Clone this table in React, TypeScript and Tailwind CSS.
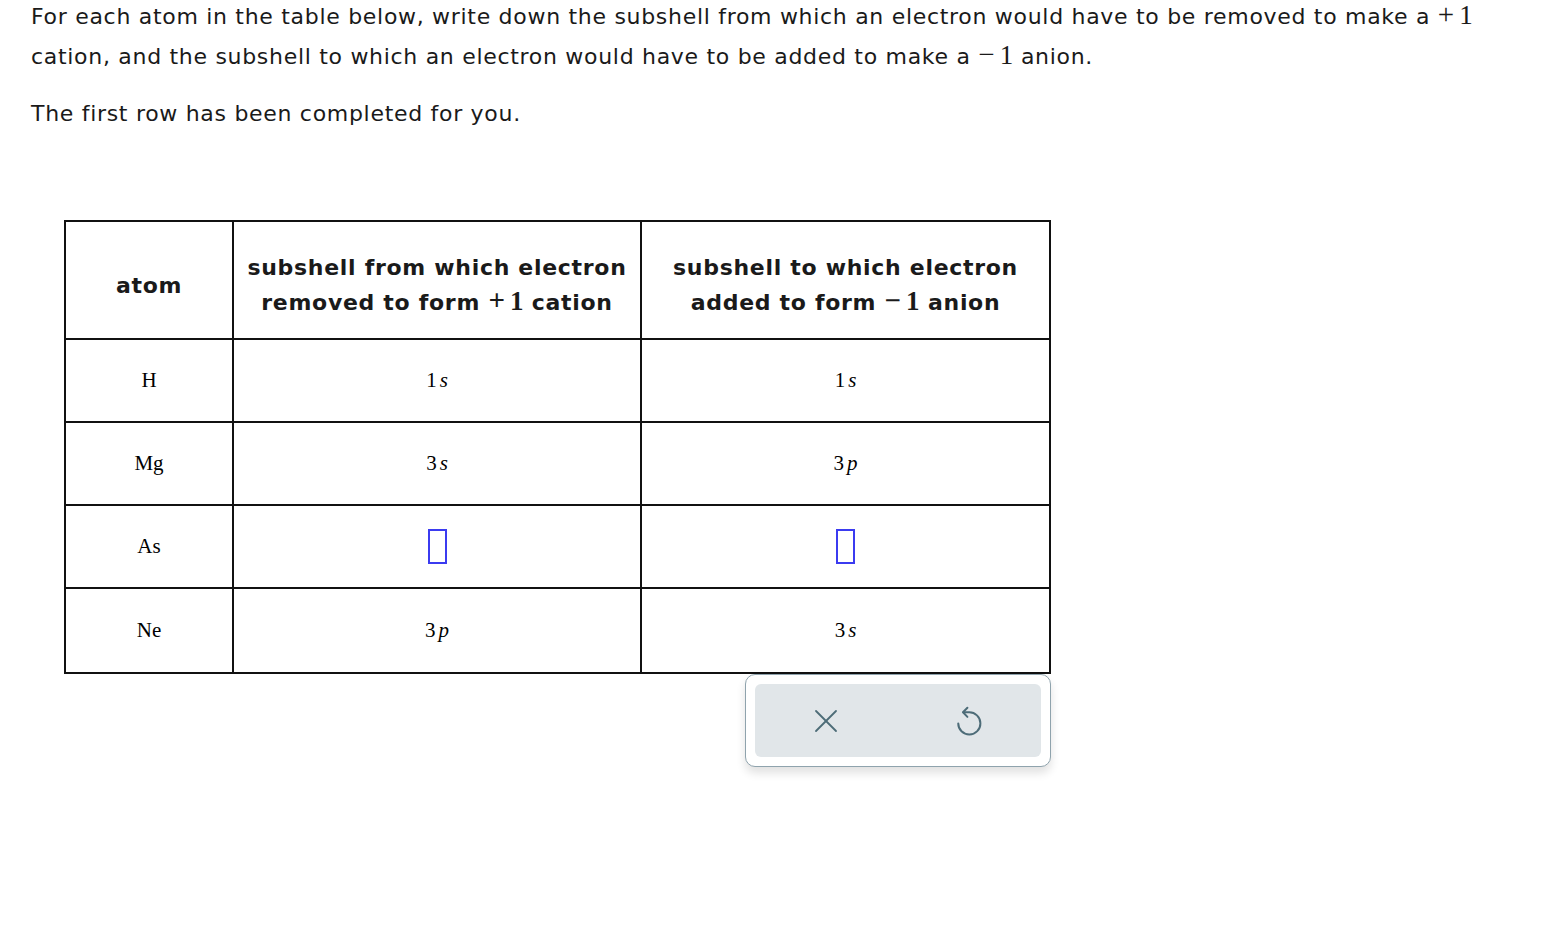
import { X } from 'lucide-react';

const rows = [
  { atom: 'H', cation: ['1', 's'], anion: ['1', 's'] },
  { atom: 'Mg', cation: ['3', 's'], anion: ['3', 'p'] },
  { atom: 'As', cation: null, anion: null },
  { atom: 'Ne', cation: ['3', 'p'], anion: ['3', 's'] },
];

const serif = "font-['Liberation_Serif',serif]";

// MathJax-style signed number: operator, thin gap, digit
function Num({ sign, n }: { sign: string; n: string }) {
  return (
    <span className={`${serif} text-[27px] leading-none tracking-normal`}>
      <span className="text-[29px]">{sign}</span>
      <span className="ml-[5px]">{n}</span>
    </span>
  );
}

function Orbital({ value }: { value: string[] | null }) {
  if (!value) {
    return <span className="inline-block w-[19px] h-[35px] border-2 border-[#3b3bf0] align-middle" />;
  }
  return (
    <span className={`${serif} text-[21px] text-black`}>
      {value[0]}
      <i className="ml-[3px]">{value[1]}</i>
    </span>
  );
}

function UndoIcon() {
  return (
    <svg width="38" height="38" viewBox="0 0 24 24" fill="none" stroke="currentColor" strokeWidth="1.25" strokeLinecap="round" strokeLinejoin="round">
      <path d="M5.2 13.5 A7 7 0 1 0 12 6.5 H8.5" />
      <path d="M11 3.6 L8.2 6.5 L11 9.4" />
    </svg>
  );
}

export default function App() {
  return (
    <div className="min-h-screen bg-white font-['DejaVu_Sans',sans-serif] text-[#1a1a1a]">
      <div className="pl-[31px] pr-8 -mt-[3px]">
        <p className="text-[22px] leading-[40px] tracking-[0.7px]">
          For each atom in the table below, write down the subshell from which an electron would have to be removed to make a{' '}
          <Num sign="+" n="1" />
          <br />
          cation, and the subshell to which an electron would have to be added to make a <Num sign="−" n="1" /> anion.
        </p>
        <p className="text-[22px] leading-[40px] tracking-[0.7px] mt-[17px]">The first row has been completed for you.</p>
      </div>

      <div className="ml-[64px] mt-[86px] w-[987px]">
        <table className="w-full border-collapse border-2 border-[#111]">
          <thead>
            <tr className="h-[118px]">
              <th className="w-[168px] pt-[10px] border-2 border-[#111] text-[22px] tracking-[0.7px] font-bold text-center leading-[35px]">atom</th>
              <th className="w-[408px] pt-[10px] border-2 border-[#111] text-[22px] tracking-[0.7px] font-bold text-center leading-[35px]">
                subshell from which electron
                <br />
                removed to form <Num sign="+" n="1" /> cation
              </th>
              <th className="pt-[10px] border-2 border-[#111] text-[22px] tracking-[0.7px] font-bold text-center leading-[35px]">
                subshell to which electron
                <br />
                added to form <Num sign="−" n="1" /> anion
              </th>
            </tr>
          </thead>
          <tbody>
            {rows.map((r, i) => (
              <tr key={r.atom} className={i === 3 ? 'h-[85px]' : 'h-[83px]'}>
                <td className={`border-2 border-[#111] text-center ${serif} text-[21px] text-black`}>{r.atom}</td>
                <td className="border-2 border-[#111] text-center">
                  <Orbital value={r.cation} />
                </td>
                <td className="border-2 border-[#111] text-center">
                  <Orbital value={r.anion} />
                </td>
              </tr>
            ))}
          </tbody>
        </table>

        <div className="flex justify-end">
          <div className="w-[306px] h-[93px] rounded-[10px] border-[1.5px] border-[#8fa3ad] bg-white p-[9px] shadow-[0_6px_10px_rgba(0,0,0,0.12)]">
            <div className="flex h-full items-center rounded-[6px] bg-[#e1e6e9]">
              <button className="ml-[51px] flex h-10 w-10 items-center justify-center text-[#4d6c78]">
                <X size={42} strokeWidth={1.1} />
              </button>
              <button className="ml-[103px] flex h-10 w-10 items-center justify-center text-[#4d6c78]">
                <UndoIcon />
              </button>
            </div>
          </div>
        </div>
      </div>
    </div>
  );
}
